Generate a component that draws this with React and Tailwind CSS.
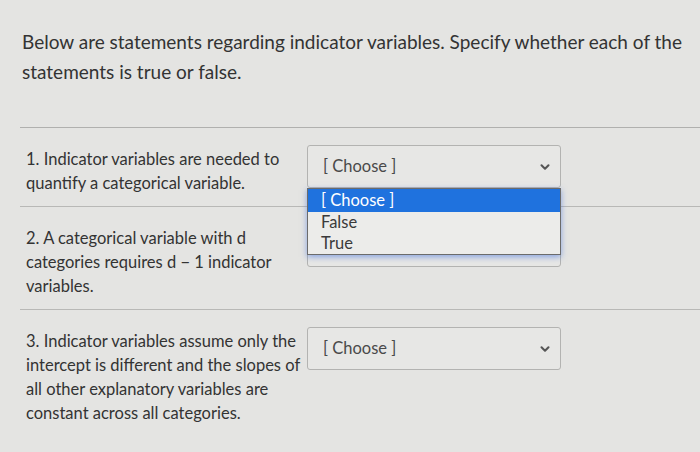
import { ChevronDown } from 'lucide-react'

const QUESTIONS = [
  { id: 1, text: '1. Indicator variables are needed to quantify a categorical variable.', open: true },
  { id: 2, text: '2. A categorical variable with d categories requires d − 1 indicator variables.' },
  { id: 3, text: '3. Indicator variables assume only the intercept is different and the slopes of all other explanatory variables are constant across all categories.' },
]

const OPTIONS = ['[ Choose ]', 'False', 'True']

function Select({ open }) {
  return (
    <div className="relative w-[254px] shrink-0">
      <div className="h-[43px] rounded-[3px] border border-[#b3b3b1] bg-[#e7e7e5] flex items-center justify-between pl-[15px] pr-[8px]">
        <span className="text-[16.5px] text-[#4a4a4a]">[ Choose ]</span>
        <ChevronDown size={14} strokeWidth={3.5} className="text-[#555]" />
      </div>
      {open && (
        <div className="absolute left-0 right-0 top-[43px] z-10 border border-[#6b6b6b] bg-[#ececea] shadow-[0_2px_6px_rgba(60,110,220,0.55)]">
          {OPTIONS.map((o, i) => (
            <div key={o} className={i === 0 ? 'h-[23px] leading-[23px] pl-[13px] text-[16.5px] bg-[#1f72de] text-white' : 'h-[21px] leading-[21px] pl-[13px] text-[16.5px] text-[#3a3a3a]'}>{o}</div>
          ))}
        </div>
      )}
    </div>
  )
}

export default function App() {
  return (
    <div className="min-h-[452px] bg-[#e4e4e2] font-['Lato','Open_Sans',sans-serif] text-[#333] overflow-hidden">
      <p className="pl-[22px] pt-[27px] w-[700px] text-[19px] leading-[30px]">
        Below are statements regarding indicator variables. Specify whether each of the statements is true or false.
      </p>

      <div className="mt-[40px]">
        {QUESTIONS.map(q => (
          <div key={q.id} className="ml-[20px] border-t border-[#b8b8b6] first:border-[#b0b0ae] pt-[17px] pb-[11px] flex items-start">
            <p className="w-[287px] shrink-0 pl-[6px] pr-[2px] pt-[2px] text-[16.5px] leading-[24px]">{q.text}</p>
            <Select open={q.open} />
          </div>
        ))}
      </div>
    </div>
  )
}
